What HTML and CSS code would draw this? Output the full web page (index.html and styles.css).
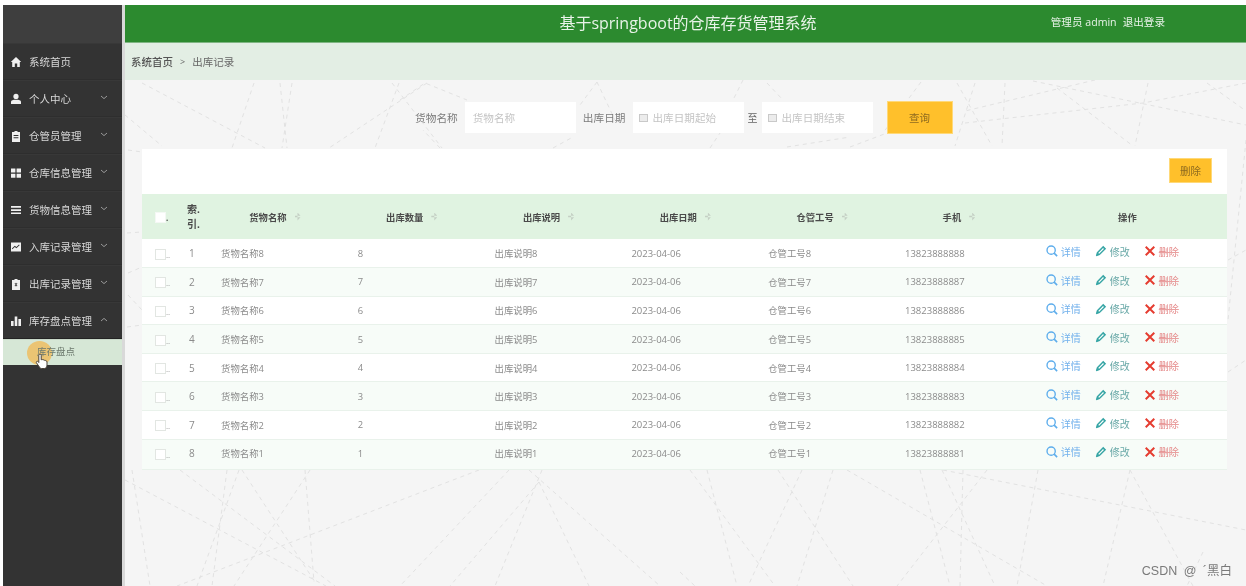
FILE: index.html
```html
<!DOCTYPE html>
<html lang="zh-CN">
<head>
<meta charset="utf-8">
<title>出库记录</title>
<link rel="stylesheet" href="styles.css">
</head>
<body>
<svg class="defs" aria-hidden="true">
  <symbol id="i-view" viewBox="0 0 14 14"><circle cx="6" cy="6" r="4.8" fill="none" stroke-width="1.6"/><path d="M9.5 9.5 13 13" fill="none" stroke-width="1.8"/></symbol>
  <symbol id="i-edit" viewBox="0 0 14 14"><path d="M9.6 1 13 4.4 5.6 11.8 1.800 13 1 12.200 2.200 8.400zM9.400 3.600 3.800 9.200 4.800 10.200 10.400 4.600z" fill-rule="evenodd" stroke="none"/></symbol>
  <symbol id="i-del" viewBox="0 0 14 14"><path d="M2 2 12 12M12 2 2 12" fill="none" stroke-width="2.3"/></symbol>
</svg>
<div class="app">
  <aside class="sidebar">
    <div class="side-top"></div>
    <nav class="menu">
      <a class="item"><svg class="ico" viewBox="0 0 12 12"><path d="M6 1 .8 6h1.400v5h2.600V7.600h2.400V11h2.600V6h1.400z"/></svg><span class="lbl">系统首页</span></a>
      <a class="item"><svg class="ico" viewBox="0 0 12 12"><circle cx="6" cy="3.400" r="2.600"/><path d="M1 11V8.600C1 7.400 3 6.800 6 6.800s5 .6 5 1.800V11z"/></svg><span class="lbl">个人中心</span><svg class="chev" viewBox="0 0 8 5"><path d="M1 1l3 2.600L7 1"/></svg></a>
      <a class="item"><svg class="ico" viewBox="0 0 12 12"><path d="M2 2h2.500V1h3v1H10v10H2zM3.600 5v1h4.800V5zm0 2.200v1h4.800v-1z" fill-rule="evenodd"/></svg><span class="lbl">仓管员管理</span><svg class="chev" viewBox="0 0 8 5"><path d="M1 1l3 2.600L7 1"/></svg></a>
      <a class="item"><svg class="ico" viewBox="0 0 12 12"><path d="M1 1.500h4.400v4H1zM6.600 1.500H11v4H6.600zM1 6.700h4.400v4H1zM6.600 6.700H11v4H6.600z"/></svg><span class="lbl">仓库信息管理</span><svg class="chev" viewBox="0 0 8 5"><path d="M1 1l3 2.600L7 1"/></svg></a>
      <a class="item"><svg class="ico" viewBox="0 0 12 12"><path d="M1 2h10v1.700H1zM1 5.200h10v1.700H1zM1 8.400h10v1.700H1z"/></svg><span class="lbl">货物信息管理</span><svg class="chev" viewBox="0 0 8 5"><path d="M1 1l3 2.600L7 1"/></svg></a>
      <a class="item"><svg class="ico" viewBox="0 0 12 12"><path d="M1 1.500h10v9H1zM2.400 8.200l2.400-2.300 1.600 1.300 3.200-3-.6-.6-2.600 2.400-1.600-1.300-2.900 2.800z" fill-rule="evenodd"/></svg><span class="lbl">入库记录管理</span><svg class="chev" viewBox="0 0 8 5"><path d="M1 1l3 2.600L7 1"/></svg></a>
      <a class="item"><svg class="ico" viewBox="0 0 12 12"><path d="M2 2h2.500V1h3v1H10v10H2zM4.600 5.400l1 1.200-1 1.200.6.600L6 7.300l.8 1.100.6-.6-1-1.200 1-1.200-.6-.6L6 5.900l-.8-1.100z" fill-rule="evenodd"/></svg><span class="lbl">出库记录管理</span><svg class="chev" viewBox="0 0 8 5"><path d="M1 1l3 2.600L7 1"/></svg></a>
      <a class="item open"><svg class="ico" viewBox="0 0 12 12"><path d="M1 6h2.600v5H1zM4.700 1.500h2.600V11H4.700zM8.400 4H11v7H8.400z"/></svg><span class="lbl">库存盘点管理</span><svg class="chev" viewBox="0 0 8 5"><path d="M1 4l3-2.600L7 4"/></svg></a>
      <a class="sub"><i class="halo"></i><span class="lbl">库存盘点</span><svg class="hand" viewBox="0 0 14 18"><path d="M5 1.500c.8 0 1.200.5 1.200 1.200v4.600l.6-.2c.5-.2 1 0 1.200.3.6-.3 1.200-.1 1.500.4.6-.2 1.200.1 1.400.6.6-.1 1.100.3 1.100 1v3.200c0 1.500-1 3.400-2.600 3.400H6.600c-1 0-1.700-.6-2.200-1.500L1.500 10.400c-.4-.6-.2-1.200.3-1.500.5-.3 1-.1 1.400.3l.6.8V2.700c0-.7.4-1.200 1.200-1.200z" fill="#fff" stroke="#4a4238"/></svg></a>
    </nav>
  </aside>
  <main class="main">
    <header class="topbar">
      <h1 class="title">基于springboot的仓库存货管理系统</h1>
      <div class="user"><span>管理员 admin</span><span>退出登录</span></div>
    </header>
    <div class="crumb"><b>系统首页</b><span class="sep">&gt;</span><span>出库记录</span></div>
    <section class="content">
      <svg class="bg-lines" viewBox="125 80 1121 506" aria-hidden="true">
        <path d="M142 83 265 148M125 115 162 146M254 83 232 148M280 83 287 148M292 83 282 148M399 83 375 148M392 83 442 148M427 83 329 148M400 100 425 83 467 100M597 82 580 105M597 82 615 120M743 80 733 100M767 83 783 100M553 148 573 137M440 148 423 130M710 148 720 133M787 147 850 137M850 147 887 133M921 82 883 133"/>
        <path d="M957 83 992 146M975 83 955 146M1005 83 1002 146M1057 88 1133 146M1095 80 965 111M965 123 1143 103 1246 83M1033 81 1246 125M1148 83 1135 146M1207 83 1246 111M1246 140 1228 320M1228 372 1246 360M1228 260 1246 250"/>
        <path d="M128 150 142 152M127 233 142 232M128 273 142 267M128 295 142 310M127 327 142 325"/>
        <path d="M125 480 326 586M132 470 150 586M180 470 335 586M227 470 212 586M239 470 197 586M242 470 315 582M310 470 234 586M305 470 314 582M479 470 310 535 177 586M509 470 400 586M539 482 450 586M542 470 495 586M529 470 660 586M539 482 589 586"/>
        <path d="M690 470 775 586M707 470 737 586M802 470 748 586M778 470 853 586M833 470 797 586M847 470 1047 586M920 470 950 586M942 470 995 586M963 470 960 586M987 470 897 586M943 470 1246 530M1038 470 1017 586M1130 470 1103 586M1130 470 1193 586M1203 552 1187 586M680 572 695 586"/>
      </svg>
      <form class="search">
        <label class="flabel">货物名称</label>
        <div class="field gap-r"><span class="ph">货物名称</span></div>
        <label class="flabel">出库日期</label>
        <div class="field date"><i class="cal"></i><span class="ph">出库日期起始</span></div>
        <span class="flabel to">至</span>
        <div class="field date"><i class="cal"></i><span class="ph">出库日期结束</span></div>
        <button class="btn btn-q" type="button">查询</button>
      </form>
      <div class="card">
        <div class="card-head"><button class="btn btn-d" type="button">删除</button></div>
        <table class="grid">
          <colgroup><col class="c-check"><col class="c-idx"><col class="c-data" span="6"><col></colgroup>
          <thead>
            <tr>
              <th class="t-check"><i class="box head-box"></i><span class="dot">.</span></th>
              <th class="t-idx">索.<br>引.</th>
              <th><span class="th-in">货物名称<i class="sort"></i></span></th>
              <th><span class="th-in">出库数量<i class="sort"></i></span></th>
              <th><span class="th-in">出库说明<i class="sort"></i></span></th>
              <th><span class="th-in">出库日期<i class="sort"></i></span></th>
              <th><span class="th-in">仓管工号<i class="sort"></i></span></th>
              <th><span class="th-in">手机<i class="sort"></i></span></th>
              <th class="t-ops">操作</th>
            </tr>
          </thead>
          <tbody>
            <tr><td class="t-check"><i class="box"></i><span class="dot">..</span></td><td class="t-idx">1</td><td>货物名称8</td><td>8</td><td>出库说明8</td><td class="num">2023-04-06</td><td>仓管工号8</td><td class="num">13823888888</td><td class="ops"><a class="op op-view"><svg><use href="#i-view"/></svg>详情</a><a class="op op-edit"><svg><use href="#i-edit"/></svg>修改</a><a class="op op-del"><svg><use href="#i-del"/></svg><span>删除</span></a></td></tr>
            <tr><td class="t-check"><i class="box"></i><span class="dot">..</span></td><td class="t-idx">2</td><td>货物名称7</td><td>7</td><td>出库说明7</td><td class="num">2023-04-06</td><td>仓管工号7</td><td class="num">13823888887</td><td class="ops"><a class="op op-view"><svg><use href="#i-view"/></svg>详情</a><a class="op op-edit"><svg><use href="#i-edit"/></svg>修改</a><a class="op op-del"><svg><use href="#i-del"/></svg><span>删除</span></a></td></tr>
            <tr><td class="t-check"><i class="box"></i><span class="dot">..</span></td><td class="t-idx">3</td><td>货物名称6</td><td>6</td><td>出库说明6</td><td class="num">2023-04-06</td><td>仓管工号6</td><td class="num">13823888886</td><td class="ops"><a class="op op-view"><svg><use href="#i-view"/></svg>详情</a><a class="op op-edit"><svg><use href="#i-edit"/></svg>修改</a><a class="op op-del"><svg><use href="#i-del"/></svg><span>删除</span></a></td></tr>
            <tr><td class="t-check"><i class="box"></i><span class="dot">..</span></td><td class="t-idx">4</td><td>货物名称5</td><td>5</td><td>出库说明5</td><td class="num">2023-04-06</td><td>仓管工号5</td><td class="num">13823888885</td><td class="ops"><a class="op op-view"><svg><use href="#i-view"/></svg>详情</a><a class="op op-edit"><svg><use href="#i-edit"/></svg>修改</a><a class="op op-del"><svg><use href="#i-del"/></svg><span>删除</span></a></td></tr>
            <tr><td class="t-check"><i class="box"></i><span class="dot">..</span></td><td class="t-idx">5</td><td>货物名称4</td><td>4</td><td>出库说明4</td><td class="num">2023-04-06</td><td>仓管工号4</td><td class="num">13823888884</td><td class="ops"><a class="op op-view"><svg><use href="#i-view"/></svg>详情</a><a class="op op-edit"><svg><use href="#i-edit"/></svg>修改</a><a class="op op-del"><svg><use href="#i-del"/></svg><span>删除</span></a></td></tr>
            <tr><td class="t-check"><i class="box"></i><span class="dot">..</span></td><td class="t-idx">6</td><td>货物名称3</td><td>3</td><td>出库说明3</td><td class="num">2023-04-06</td><td>仓管工号3</td><td class="num">13823888883</td><td class="ops"><a class="op op-view"><svg><use href="#i-view"/></svg>详情</a><a class="op op-edit"><svg><use href="#i-edit"/></svg>修改</a><a class="op op-del"><svg><use href="#i-del"/></svg><span>删除</span></a></td></tr>
            <tr><td class="t-check"><i class="box"></i><span class="dot">..</span></td><td class="t-idx">7</td><td>货物名称2</td><td>2</td><td>出库说明2</td><td class="num">2023-04-06</td><td>仓管工号2</td><td class="num">13823888882</td><td class="ops"><a class="op op-view"><svg><use href="#i-view"/></svg>详情</a><a class="op op-edit"><svg><use href="#i-edit"/></svg>修改</a><a class="op op-del"><svg><use href="#i-del"/></svg><span>删除</span></a></td></tr>
            <tr><td class="t-check"><i class="box"></i><span class="dot">..</span></td><td class="t-idx">8</td><td>货物名称1</td><td>1</td><td>出库说明1</td><td class="num">2023-04-06</td><td>仓管工号1</td><td class="num">13823888881</td><td class="ops"><a class="op op-view"><svg><use href="#i-view"/></svg>详情</a><a class="op op-edit"><svg><use href="#i-edit"/></svg>修改</a><a class="op op-del"><svg><use href="#i-del"/></svg><span>删除</span></a></td></tr>
          </tbody>
        </table>
      </div>
      <div class="mark">CSDN @ ´黑白</div>
    </section>
  </main>
</div>
</body>
</html>
```
FILE: styles.css
```css
* { box-sizing: border-box; }
html, body { margin: 0; height: 100%; }
body {
  background: #fff;
  font-family: "Open Sans", "Noto Sans CJK SC", sans-serif;
  overflow: hidden;
}
.defs { position: absolute; width: 0; height: 0; }
.app {
  display: flex;
  height: 586px;
  padding: 5px 0 0 3px;
  filter: blur(.55px);
}

/* sidebar */
.sidebar { width: 119px; flex: none; background: #333; display: flex; flex-direction: column; }
.side-top { height: 38px; background: #3e3e3e; flex: none; }
.menu { display: flex; flex-direction: column; }
.item {
  height: 37px;
  display: flex;
  align-items: center;
  padding: 0 0 0 7px;
  color: #d8d8d8;
  font-size: 10.5px;
  border-bottom: 1px solid #2e2e2e;
  border-top: 1px solid #383838;
  position: relative;
}
.ico { width: 12px; height: 12px; fill: #f0f0f0; flex: none; margin-right: 7px; }
.lbl { white-space: nowrap; position: relative; }
.chev { position: absolute; left: 97px; top: 14px; width: 8px; height: 5px; fill: none; stroke: #999; stroke-width: 1; }
.open { border-bottom-color: #222; }
.sub {
  height: 26px;
  background: #d6e7d6;
  color: #6d7a6e;
  font-size: 9.5px;
  display: flex;
  align-items: center;
  padding: 0 0 3px 34px;
  position: relative;
  border-top: 1px solid #c8d8c8;
}
.halo { position: absolute; left: 24px; top: 1px; width: 25px; height: 24px; border-radius: 50%; background: rgba(240, 188, 90, .8); }
.hand { position: absolute; left: 32px; top: 12px; width: 14px; height: 19px; }

/* main column */
.main { flex: 1; min-width: 0; display: flex; flex-direction: column; padding-left: 3px; background: linear-gradient(90deg, #d9d9d9, #f2f2f2); }
.topbar {
  height: 38px;
  flex: none;
  background: #2c8a2f;
  border-bottom: 1px solid #7fb582;
  color: #e8f3e8;
  position: relative;
  display: flex;
  align-items: center;
  justify-content: center;
}
.title { margin: 0 0 2px 5px; font-size: 16px; font-weight: 400; line-height: 1; }
.user { position: absolute; right: 81px; top: 9px; font-size: 10.6px; display: flex; gap: 6px; }
.crumb {
  height: 37px;
  flex: none;
  background: #e3eee4;
  display: flex;
  align-items: center;
  padding-left: 6px;
  font-size: 10.5px;
  color: #666;
}
.crumb b { font-weight: 500; color: #555; }
.sep { margin: 0 7px; font-size: 9px; }

/* content */
.content { flex: 1; position: relative; background: #f5f5f5; padding: 21px 19px 0 17px; }
.bg-lines { position: absolute; inset: 0; width: 100%; height: 100%; fill: none; stroke: #e2e2e2; stroke-width: 1; stroke-dasharray: 4 4; }
.search { position: relative; display: flex; align-items: center; height: 33px; padding-left: 273px; }
.flabel { font-size: 10.7px; color: #7b7b7b; margin-right: 7px; white-space: nowrap; }
.to { margin: 0 4px; color: #666; font-size: 10px; }
.field { width: 111px; height: 31px; background: #fff; display: flex; align-items: center; padding-left: 8px; }
.gap-r { margin-right: 7px; }
.date { padding-left: 6px; }
.ph { font-size: 10.6px; color: #c4c4c4; white-space: nowrap; }
.cal { width: 9px; height: 8px; border: 1px solid #c9c9c9; background: #ececec; margin-right: 5px; flex: none; }
.btn { border: 1px solid #ffd978; background: #ffc02b; color: #8e6a1f; font: inherit; padding: 0; }
.btn-q { width: 66px; height: 33px; font-size: 10.5px; margin-left: 14px; }
.card { position: relative; background: #fff; margin-top: 15px; width: 1085px; }
.card-head { height: 45px; display: flex; justify-content: flex-end; align-items: flex-start; padding: 9px 15px 0 0; }
.btn-d { width: 43px; height: 25px; font-size: 10.5px; }
.grid { width: 1085px; border-collapse: collapse; table-layout: fixed; font-size: 9.4px; color: #8b8b8b; }
.c-check { width: 38px; }
.c-idx { width: 35px; }
.c-data { width: 136.8px; }
thead tr { height: 45px; background: #e0f3e1; }
th { font-weight: 700; color: #4a4a4a; padding: 0; text-align: center; font-size: 9.3px; }
.th-in { display: inline-flex; align-items: center; margin-right: 17px; }
.sort { width: 6px; height: 8px; margin-left: 8px; display: inline-block; background: #c4cfc4; clip-path: polygon(50% 0, 100% 40%, 0 40%, 0 60%, 100% 60%, 50% 100%); }
.t-check { padding-left: 13px; text-align: left; white-space: nowrap; }
th.t-idx { padding-left: 7px; text-align: left; line-height: 15px; font-size: 10px; }
.t-ops { padding-right: 8px; }
tbody tr { height: 28.6px; border-bottom: 1px solid #e9f2eb; }
tbody tr:nth-child(even) { background: #f7fcf8; }
tbody tr:last-child { height: 30.6px; }
tbody tr:last-child td { padding-bottom: 2px; }
td { padding: 0 0 0 6px; white-space: nowrap; }
td.t-check { padding-left: 13px; }
td.t-idx { padding-left: 9px; font-size: 10px; }
.num { font-size: 9.5px; }
.box { display: inline-block; width: 11px; height: 11px; background: #fff; border: 1px solid #e2e6e2; vertical-align: middle; }
.head-box { border-color: #f4f8f4; }
.dot { font-size: 8px; color: #999; vertical-align: middle; }
th .dot { font-weight: 700; color: #444; }
td.ops { padding-left: 10px; font-size: 10px; }
.op { display: inline-flex; align-items: center; position: relative; top: -1px; }
.op svg { width: 12px; height: 12px; margin-right: 3px; flex: none; }
.op-view { color: #72b1ec; fill: #5dadec; stroke: #5dadec; margin-right: 14px; }
.op-edit { color: #6aa9a8; fill: #36a5a5; stroke: #36a5a5; margin-right: 14px; }
.op-del { color: #e58a8a; fill: #e53c30; stroke: #e53c30; }
.op-del span { text-decoration: line-through; text-decoration-color: #e9a0a0; }
.mark { position: absolute; right: 14px; bottom: 7px; font: 12.5px "Liberation Sans", "Noto Sans CJK SC", sans-serif; word-spacing: 3px; color: #7a7a7a; }
```
